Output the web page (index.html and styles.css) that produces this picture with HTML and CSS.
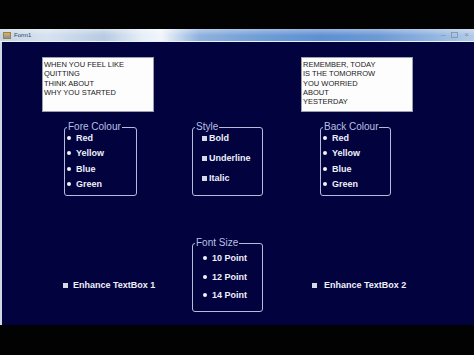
FILE: index.html
```html
<!DOCTYPE html>
<html lang="en">
<head>
    <meta charset="UTF-8">
    <title>Form1</title>
    <link rel="stylesheet" href="styles.css">
</head>
<body>
    <div class="screen">
        <div class="window">
            <div class="titlebar">
                <span class="app-icon"></span>
                <span class="title">Form1</span>
                <span class="controls">
                    <span class="ctl">&#8211;</span>
                    <span class="ctl ctl-max"></span>
                    <span class="ctl">&#215;</span>
                </span>
            </div>

            <div class="client">
                <div class="row row-top">
                    <div class="textbox tb-left">WHEN YOU FEEL LIKE<br>QUITTING<br>THINK ABOUT<br>WHY YOU STARTED</div>
                    <div class="textbox tb-right">REMEMBER, TODAY<br>IS THE TOMORROW<br>YOU WORRIED<br>ABOUT<br>YESTERDAY</div>
                </div>

                <div class="row row-mid">
                    <fieldset class="group group-fore">
                        <legend>Fore Colour</legend>
                        <div class="items colour-items">
                            <div class="item"><span class="dot"></span>Red</div>
                            <div class="item"><span class="dot"></span>Yellow</div>
                            <div class="item"><span class="dot"></span>Blue</div>
                            <div class="item"><span class="dot"></span>Green</div>
                        </div>
                    </fieldset>

                    <fieldset class="group group-style">
                        <legend>Style</legend>
                        <div class="items style-items">
                            <div class="item"><span class="box"></span>Bold</div>
                            <div class="item"><span class="box"></span>Underline</div>
                            <div class="item"><span class="box"></span>Italic</div>
                        </div>
                    </fieldset>

                    <fieldset class="group group-back">
                        <legend>Back Colour</legend>
                        <div class="items colour-items">
                            <div class="item"><span class="dot"></span>Red</div>
                            <div class="item"><span class="dot"></span>Yellow</div>
                            <div class="item"><span class="dot"></span>Blue</div>
                            <div class="item"><span class="dot"></span>Green</div>
                        </div>
                    </fieldset>
                </div>

                <div class="row row-bottom">
                    <div class="check check-left"><span class="box"></span>Enhance TextBox 1</div>

                    <fieldset class="group group-size">
                        <legend>Font Size</legend>
                        <div class="items size-items">
                            <div class="item"><span class="dot"></span>10 Point</div>
                            <div class="item"><span class="dot"></span>12 Point</div>
                            <div class="item"><span class="dot"></span>14 Point</div>
                        </div>
                    </fieldset>

                    <div class="check check-right"><span class="box"></span>Enhance TextBox 2</div>
                </div>
            </div>
        </div>
    </div>
</body>
</html>
```

FILE: styles.css
```css
html, body {
    margin: 0;
    padding: 0;
    background-color: #020202;
}

body {
    width: 474px;
    height: 355px;
    overflow: hidden;
    font-family: "Liberation Sans", Arial, sans-serif;
}

.screen {
    padding-top: 29px;
}

/* window chrome */
.titlebar {
    height: 13px;
    display: flex;
    align-items: center;
    box-sizing: border-box;
    border-bottom: 1px solid #e8f0f8;
    background:
        linear-gradient(180deg, rgba(255,255,255,0.35) 0%, rgba(255,255,255,0) 55%),
        linear-gradient(90deg, #c4d4e6 0%, #d6e2ef 10%, #b8cbe2 22%, #e6eef8 30%, #f2f6fb 34%, #8fb2dd 42%, #6f9dd6 55%, #5f90d2 68%, #6d9ad5 80%, #93b6e0 92%, #b4cbe7 100%);
}

.app-icon {
    width: 6px;
    height: 5px;
    margin-left: 3px;
    background: linear-gradient(180deg, #e0b050 0%, #8090b0 100%);
    border: 1px solid #a08040;
}

.title {
    margin-left: 3px;
    font-size: 6px;
    color: #30405a;
}

.controls {
    margin-left: auto;
    margin-right: 5px;
    display: flex;
    gap: 6px;
    align-items: center;
}

.ctl {
    font-size: 8px;
    line-height: 8px;
    color: #7c8ea8;
}

.ctl-max {
    width: 5px;
    height: 4px;
    border: 1px solid #8a9ab2;
}

.client {
    height: 283px;
    box-sizing: border-box;
    background-color: #02023e;
    border-left: 2px solid #cfd8e4;
}

.row {
    display: flex;
    align-items: flex-start;
}

/* text boxes */
.row-top {
    padding-top: 15px;
}

.textbox {
    width: 112px;
    height: 55px;
    box-sizing: border-box;
    padding: 2px 0 0 1px;
    background-color: #fdfdfd;
    border: 1px solid #9aa0b0;
    font-size: 7.5px;
    line-height: 9.3px;
    color: #1a1a1a;
}

.tb-left {
    margin-left: 40px;
}

.tb-right {
    margin-left: 147px;
}

/* group boxes */
.row-mid {
    margin-top: 10px;
}

.group {
    margin: 0;
    padding: 0;
    min-width: 0;
    height: 74px;
    box-sizing: border-box;
    border: 1px solid #b4bcdc;
    border-radius: 3px;
}

.group legend {
    margin-left: 2px;
    padding: 0 1px;
    font-size: 10px;
    line-height: 10px;
    color: #b8c0e2;
}

.group-fore {
    width: 73px;
    margin-left: 62px;
}

.group-style {
    width: 71px;
    margin-left: 55px;
}

.group-back {
    width: 71px;
    margin-left: 57px;
}

.items {
    display: flex;
    flex-direction: column;
}

.item {
    display: flex;
    align-items: center;
    font-size: 9px;
    font-weight: bold;
    color: #eef0fa;
}

.colour-items {
    margin-top: -2px;
    padding-left: 2px;
}

.colour-items .item {
    height: 15.5px;
}

.colour-items .dot {
    margin-right: 5px;
}

.style-items {
    margin-top: -4px;
    padding-left: 9px;
}

.style-items .item {
    height: 20px;
}

.size-items {
    margin-top: 1px;
    padding-left: 10px;
}

.size-items .item {
    height: 18.5px;
}

.size-items .dot {
    margin-right: 5px;
}

.dot {
    width: 4px;
    height: 4px;
    border-radius: 50%;
    background-color: #f2f2fa;
}

.box {
    width: 5px;
    height: 5px;
    margin-right: 2px;
    background-color: #d6d8e6;
}

/* bottom row */
.row-bottom {
    margin-top: 42px;
}

.check {
    display: flex;
    align-items: center;
    margin-top: 42px;
    height: 10px;
    font-size: 9px;
    font-weight: bold;
    color: #eef0fa;
}

.check-left {
    width: 129px;
    margin-left: 61px;
}

.check-left .box {
    margin-right: 5px;
}

.group-size {
    width: 71px;
}

.check-right {
    margin-left: 49px;
}

.check-right .box {
    margin-right: 7px;
}
```
